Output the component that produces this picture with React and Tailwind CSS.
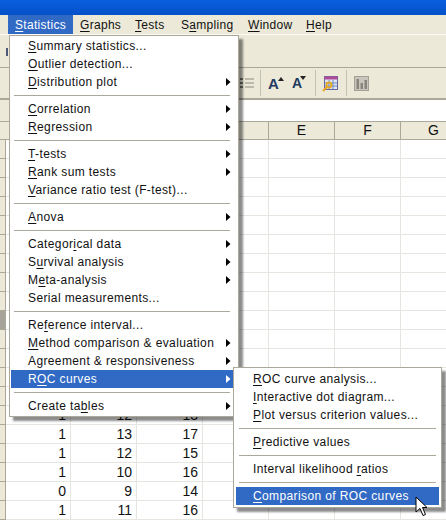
const font = { fontFamily: '"Liberation Sans", Arial, sans-serif' };

const statsMenu = [
  ["^Summary statistics...", false],
  ["^Outlier detection...", false],
  ["^Distribution plot", true],
  null,
  ["^Correlation", true],
  ["^Regression", true],
  null,
  ["^T-tests", true],
  ["^Rank sum tests", true],
  ["^Variance ratio test (F-test)...", false],
  null,
  ["^Anova", true],
  null,
  ["Categor^ical data", true],
  ["S^urvival analysis", true],
  ["M^eta-analysis", true],
  ["Serial measurements...", false],
  null,
  ["Re^ference interval...", false],
  ["^Method comparison & evaluation", true],
  ["Agreement & responsiveness", true],
  ["R^OC curves", true, true],
  null,
  ["Create ta^bles", true],
];

const rocMenu = [
  ["^ROC curve analysis...", false],
  ["^Interactive dot diagram...", false],
  ["^Plot versus criterion values...", false],
  null,
  ["^Predictive values", false],
  null,
  ["Interval likelihood ^ratios", false],
  null,
  ["^Comparison of ROC curves", false, true],
];

const rows = [
  [], [], [], [], [], [], [], [], [], [], [], [], [], [],
  ["1", "12", "13"],
  ["1", "13", "17"],
  ["1", "12", "15"],
  ["1", "10", "16"],
  ["0", "9", "14"],
  ["1", "11", "16"],
];

// "^" marks the mnemonic letter
function Label({ text }) {
  const i = text.indexOf("^");
  if (i < 0) return <span>{text}</span>;
  return (
    <span>
      {text.slice(0, i)}
      <span className="underline underline-offset-2">{text[i + 1]}</span>
      {text.slice(i + 2)}
    </span>
  );
}

function MenuList({ items, textPad }) {
  return items.map((item, i) => {
    if (!item) {
      return (
        <div key={i} className="flex h-[9px] items-center px-[3px]">
          <div className="h-px w-full bg-[#aca899]" />
        </div>
      );
    }
    const [label, sub, active] = item;
    return (
      <div
        key={i}
        className={`relative flex h-[18px] items-center whitespace-nowrap tracking-[0.38px] ${textPad} ${
          active ? "bg-[#316ac5] text-white" : "text-[#111]"
        }`}
      >
        <Label text={label} />
        {sub && (
          <svg
            className={`absolute right-[2px] top-[5px] ${active ? "text-white" : "text-black"}`}
            width="5"
            height="8"
            viewBox="0 0 5 8"
          >
            <path d="M0 0l4.500 4L0 8z" fill="currentColor" />
          </svg>
        )}
      </div>
    );
  });
}

function TopItem({ text, className }) {
  return (
    <div className={`flex h-[19px] items-center tracking-[0.3px] ${className}`}>
      <Label text={text} />
    </div>
  );
}

function Sep() {
  return <div className="h-[26px] w-px bg-[#c5c2b0]" />;
}

export default function App() {
  return (
    <div style={font} className="relative h-[520px] w-[446px] overflow-hidden bg-white text-[12px] text-[#111]">
      {/* title bar */}
      <div className="h-[15px] bg-gradient-to-b from-[#0a5fe0] to-[#0551c8]" />

      {/* menu bar */}
      <div className="flex h-[20px] border-b border-[#fbfaf5] bg-[#ece9d8] pl-[8px]">
        <TopItem text="^Statistics" className="w-[65px] bg-[#316ac5] pl-[7px] text-white" />
        <TopItem text="^Graphs" className="ml-[7px] w-[55px]" />
        <TopItem text="^Tests" className="w-[46px]" />
        <TopItem text="S^ampling" className="w-[67px]" />
        <TopItem text="^Window" className="w-[58px]" />
        <TopItem text="^Help" />
      </div>

      {/* toolbars */}
      <div className="relative h-[33px] border-b border-[#aca899] bg-[#ece9d8]">
        <div className="absolute left-[6px] top-[13px] h-[8px] w-[2px] bg-[#4a5a78]" />
      </div>
      <div className="flex h-[32px] items-center border-b-2 border-[#aca899] bg-[#ece9d8] pl-[240px]">
        <svg width="14" height="14" viewBox="0 0 14 14" className="text-[#8c8a80]">
          <path d="M0 2h3v2H0zM0 6h3v2H0zM0 10h3v2H0z" fill="#77756b" />
          <path d="M5 3h9M5 7h9M5 11h9" stroke="currentColor" />
        </svg>
        <div className="ml-[6px]"><Sep /></div>
        <div className="ml-[7px] flex w-[16px] items-start">
          <span className="text-[15px] font-bold leading-[17px] text-[#1f3a5f]">A</span>
          <svg width="6" height="5" viewBox="0 0 6 5" className="-ml-px mt-[2px]">
            <path d="M0 4L3 0l3 4z" fill="#222" />
          </svg>
        </div>
        <div className="ml-[8px] flex w-[15px] items-start">
          <span className="text-[14px] font-bold leading-[17px] text-[#1f3a5f]">A</span>
          <svg width="6" height="5" viewBox="0 0 6 5" className="-ml-[2px] mt-[1px]">
            <path d="M0 0h6L3 4z" fill="#222" />
          </svg>
        </div>
        <div className="ml-[8px]"><Sep /></div>
        <svg width="17" height="17" viewBox="0 0 17 17" className="ml-[6px]">
          <rect x="2.500" y="1.500" width="13" height="13" fill="#dfe6f5" stroke="#6a6a9a" />
          <path d="M2.500 1.500h13v3h-13z" fill="#b04a9a" />
          <path d="M7 5v9M11 5v9M3 8h12M3 11h12" stroke="#6a8ac0" />
          <circle cx="7" cy="10" r="2.500" fill="none" stroke="#e8a820" strokeWidth="1.800" />
          <path d="M5 12L1 16" stroke="#e8a820" strokeWidth="2.200" />
        </svg>
        <div className="ml-[7px]"><Sep /></div>
        <svg width="15" height="15" viewBox="0 0 15 15" className="ml-[7px]">
          <rect x="0.500" y="0.500" width="14" height="14" fill="#c8c6bc" stroke="#a3a197" />
          <path d="M2.500 3h2.500v10H2.500zM6.500 7h2.500v6H6.500zM10.500 4h2.500v9h-2.500z" fill="#87857c" />
        </svg>
      </div>

      {/* formula bar */}
      <div className="flex h-[21px] bg-white">
        <div className="w-[100px] bg-[#ece9d8]" />
      </div>

      {/* column headers */}
      <div className="flex h-[19px] border-y border-[#aca899] bg-[#ece9d8] pl-[6px] text-[14px]">
        {["", "", "", "", "E", "F", "G"].map((c, i) => (
          <div
            key={i}
            className={`flex shrink-0 items-center justify-center border-r border-[#aca899] ${
              i === 0 ? "w-[65px]" : "w-[66px]"
            }`}
          >
            {c}
          </div>
        ))}
      </div>

      {/* sheet */}
      {rows.map((r, y) => (
        <div key={y} className="flex h-[19px] text-[14px]">
          <div className={`w-[6px] shrink-0 border-b border-r border-[#aca899] ${y === 9 ? "bg-[#a5a39a]" : "bg-[#ece9d8]"}`} />
          {[0, 1, 2, 3, 4, 5, 6].map((c) => (
            <div
              key={c}
              className={`flex shrink-0 items-center justify-end border-b border-r border-[#e6e6e0] pr-[4px] ${
                c === 0 ? "w-[65px]" : "w-[66px]"
              }`}
            >
              {r[c]}
            </div>
          ))}
        </div>
      ))}

      {/* Statistics dropdown */}
      <div className="absolute left-[9px] top-[35px] w-[230px] border border-[#aca899] bg-white py-px pl-px pr-[5px] shadow-[4px_4px_2px_rgba(0,0,0,0.45)]">
        <MenuList items={statsMenu} textPad="pl-[17px]" />
      </div>

      {/* ROC curves submenu */}
      <div className="absolute left-[233px] top-[367px] w-[209px] border border-[#aca899] bg-white p-[2px] shadow-[4px_4px_2px_rgba(0,0,0,0.45)]">
        <MenuList items={rocMenu} textPad="pl-[17px]" />
      </div>

      {/* mouse pointer */}
      <svg className="absolute left-[415px] top-[496px]" width="14" height="22" viewBox="0 0 14 22">
        <path d="M1 1v15l4-3.500 3 7 2.500-1-3-7H12z" fill="#fff" stroke="#000" />
      </svg>
    </div>
  );
}
